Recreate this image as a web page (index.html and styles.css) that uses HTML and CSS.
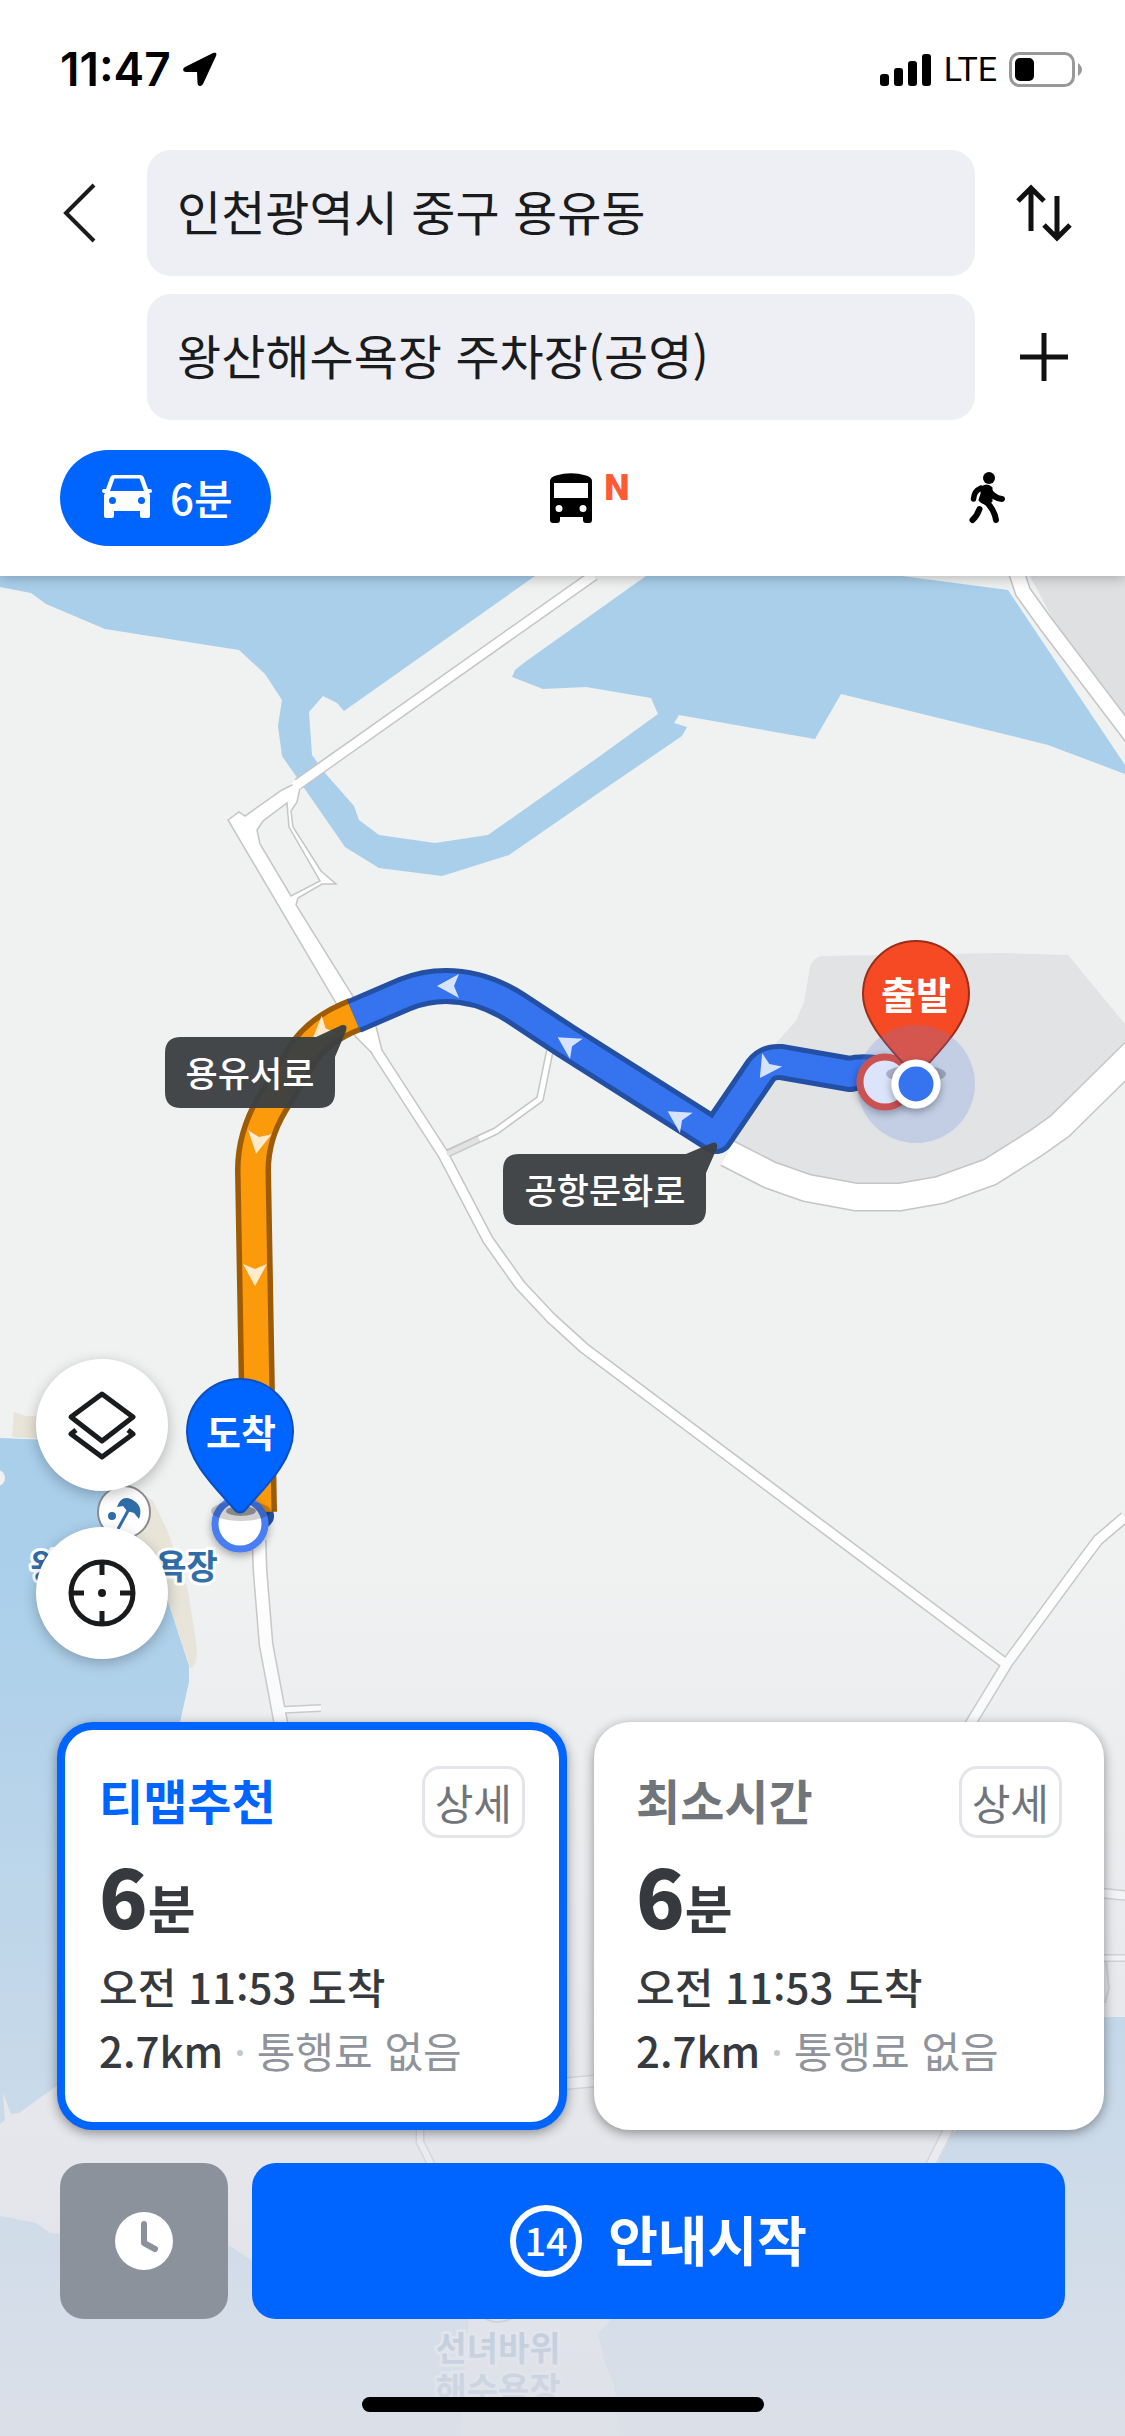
FILE: index.html
```html
<!DOCTYPE html>
<html lang="ko">
<head>
    <meta charset="UTF-8">
    <meta name="viewport" content="width=device-width, initial-scale=1.0">
    <title>길찾기</title>
    <link rel="stylesheet" href="styles.css">
</head>
<body>
    <header class="top">
        <div class="status-bar">
            <div class="status-left">
                <span class="clock">11:47</span>
                <svg width="34" height="34" viewBox="0 0 34 34"><path d="M30 1 L2 15 C-1 17 0 20 3 20 L14 20 L14.500 31 C15 35 18 35 20 32 L33 4 C34 1 33 0 30 1Z"/></svg>
            </div>
            <div class="status-right">
                <svg width="52" height="33" viewBox="0 0 52 33">
                    <rect x="0" y="21" width="9" height="12" rx="3"/>
                    <rect x="14" y="15" width="9" height="18" rx="3"/>
                    <rect x="28" y="8" width="9" height="25" rx="3"/>
                    <rect x="42" y="1" width="9" height="32" rx="3"/>
                </svg>
                <span class="network">LTE</span>
                <svg width="74" height="35" viewBox="0 0 74 35">
                    <rect x="1.500" y="1.500" width="63" height="32" rx="9" fill="none" stroke="#999" stroke-width="3"/>
                    <rect x="6" y="6" width="19" height="23" rx="5"/>
                    <path d="M69 11 Q73 14 73 17.500 Q73 21 69 24Z" fill="#999"/>
                </svg>
            </div>
        </div>

        <form class="route-form">
            <button type="button" class="icon-button back" aria-label="뒤로">
                <svg width="40" height="60" viewBox="0 0 40 60"><path d="M34 2 L6 30 L34 58" fill="none" stroke="#1a1b1d" stroke-width="4"/></svg>
            </button>
            <input type="text" class="place" aria-label="출발지" value="인천광역시 중구 용유동">
            <button type="button" class="icon-button" aria-label="출발지 도착지 바꾸기">
                <svg width="60" height="60" viewBox="0 0 60 60" fill="none" stroke="#111" stroke-width="5">
                    <path d="M17 48 V5 M4 18 L17 5 L30 18"/>
                    <path d="M43 13 V55 M30 42 L43 55 L56 42"/>
                </svg>
            </button>
            <input type="text" class="place place-end" aria-label="도착지" value="왕산해수욕장 주차장(공영)">
            <button type="button" class="icon-button" aria-label="경유지 추가">
                <svg width="60" height="60" viewBox="0 0 60 60"><path d="M30 6 V54 M6 30 H54" stroke="#111" stroke-width="5"/></svg>
            </button>
        </form>

        <nav class="modes">
            <button type="button" class="mode mode-active" aria-label="자동차 6분">
                <svg width="50" height="43" viewBox="0 0 50 43" fill="#fff">
                    <path fill-rule="evenodd" d="M12 0 H38 Q41 0 42 3 L46 14 H48 Q50 14 50 16 Q50 18 48 18 H47 Q48 19 48 21 V41 Q48 43 46 43 H40 Q38 43 38 41 V36 H12 V41 Q12 43 10 43 H4 Q2 43 2 41 V21 Q2 19 3 18 H2 Q0 18 0 16 Q0 14 2 14 H4 L8 3 Q9 0 12 0Z M12.500 3.500 L8 16 H42 L37.500 3.500Z M10.500 22 A3.500 3.500 0 1 0 10.500 29 A3.500 3.500 0 1 0 10.500 22Z M39.500 22 A3.500 3.500 0 1 0 39.500 29 A3.500 3.500 0 1 0 39.500 22Z"/>
                </svg>
                <span>6분</span>
            </button>
            <button type="button" class="mode" aria-label="대중교통">
                <svg width="42" height="50" viewBox="0 0 42 50">
                    <path fill-rule="evenodd" d="M0 8 Q0 4 6 2.500 Q21 -2 36 2.500 Q42 4 42 8 V47 Q42 50 39 50 H36 Q33 50 33 47 V44 H10 V47 Q10 50 7 50 H3 Q0 50 0 47Z M4 10 V25 H38 V10Z M9 32 A3.500 3.500 0 1 0 9 39 A3.500 3.500 0 1 0 9 32Z M33 32 A3.500 3.500 0 1 0 33 39 A3.500 3.500 0 1 0 33 32Z"/>
                </svg>
                <span class="new-mark">N</span>
            </button>
            <button type="button" class="mode mode-walk" aria-label="도보">
                <svg width="36" height="52" viewBox="0 0 36 52" fill="none" stroke="#000" stroke-linecap="round" stroke-linejoin="round">
                    <circle cx="20" cy="6" r="6" fill="#000" stroke="none"/>
                    <path d="M12 16 Q5 19 4.500 27" stroke-width="5.500"/>
                    <path d="M19 17 Q24 26 33 27" stroke-width="6"/>
                    <path d="M13 16 Q18 12 22 16 L22 29 Q17 34 11 28 L13 22Z" fill="#000" stroke-width="3"/>
                    <path d="M15 28 Q25 36 27 48" stroke-width="6"/>
                    <path d="M10.500 37 Q8 44 3.500 48" stroke-width="6"/>
                </svg>
            </button>
        </nav>
    </header>

    <main class="map-area">
        <svg class="map" viewBox="0 576 1125 1860" preserveAspectRatio="xMidYMin slice">
            <defs>
                <path id="arrow" d="M-11 0 L11 -12 L6 0 L11 12Z" fill="#fff" fill-opacity=".8"/>
                <filter id="soft" x="-50%" y="-50%" width="200%" height="200%">
                    <feDropShadow dx="0" dy="3" stdDeviation="4" flood-opacity=".35"/>
                </filter>
            </defs>

            <!-- land -->
            <rect y="576" width="1125" height="1860" fill="#f0f1f1"/>
            <path d="M1030 576 L1058 629 L1125 715 V576Z" fill="#dfe0e1"/>
            <path d="M822 956 L1003 953 L1068 955 L1125 1024 V1060 L1040 1135 L960 1180 L856 1190 L770 1166 L725 1142 L776 1043 L796 1021 L804 1002 L810 967 Q813 957 822 956Z" fill="#e1e3e4"/>

            <!-- water -->
            <g fill="#a9cfeb">
                <path d="M0 576 H535 L344 711 L337 703 L323 696 L309 712 L312 755 L325 773 L354 806 L359 820 L379 835 L435 843 L488 835 L600 756 L658 714 L651 698 L586 687 L543 689 L512 677 L515 670 L525 662 L646 576 H902 L1008 590 L1125 765 V774 L1048 745 L841 694 L815 739 L679 715 L674 723 L687 727 L682 736 L600 792 L509 855 L442 876 L379 868 L345 847 L282 756 L278 726 L282 700 L265 674 L239 650 L105 629 L46 604 L31 593 L0 587Z"/>
                <path d="M0 1438 L100 1442 L140 1500 L168 1601 L189 1666 L189 1682 L176 1740 L120 2040 L19 2113 L11 2114 L3 2093 L5 2120 L0 2124Z"/>
                <path d="M0 2216 L36 2223 L50 2233 L230 2246 L251 2260 L330 2290 L469 2319 L460 2436 H0Z"/>
                <path d="M1125 2017 H1060 L985 2100 L951 2136 L930 2180 L830 2290 L620 2310 L598 2334 L604 2360 L614 2385 L620 2436 H1125Z"/>
            </g>
            <circle cx="-3" cy="1478" r="8" fill="#f0f1f1"/>
            <path d="M14 1412 L25 1416 L110 1418 L110 1443 L12 1437Z" fill="#e8e4d8"/>
            <path d="M125 1480 L153 1501 L168 1532 L188 1591 L197 1648 Q197 1668 190 1668 L168 1601 L120 1500Z" fill="#e8e4d8"/>

            <!-- roads -->
            <g fill="none" stroke="#c5c5c5" stroke-width="12" stroke-linejoin="round">
                <path d="M594 575 L298 784"/>
                <path d="M369 1020 L377 1052 L443 1154 L488 1240 L520 1285 L551 1318 L584 1348 L819 1524 L1006 1664"/>
                <path d="M1125 1517 L1098 1540 L1080 1564 L1008 1662 L930 1790"/>
                <path d="M550 1050 L540 1099 L496 1131 L444 1155" stroke-width="8"/>
                <path d="M259 1540 L260 1570 L266 1644 L284 1740" stroke-width="15"/>
                <path d="M280 1710 L321 1708" stroke-width="8"/>
                <path d="M1014 565 L1023 592 L1046 624 L1140 748" stroke-width="17"/>
                <path d="M727 1153 L770 1175 L807 1188 L856 1197 L900 1197 L940 1190 L990 1172 L1036 1143 L1060 1126 L1135 1052" stroke-width="29"/>
                <path d="M480 2092 L594 2081" stroke-width="13"/>
                <path d="M420 2120 L420 2142 L432 2166" stroke-width="9"/>
                <path d="M950 2126 L930 2166" stroke-width="11"/>
                <path d="M1090 1892 L1130 1896" stroke-width="11"/>
                <path d="M1090 1958 H1130" stroke-width="8"/>
                <path d="M1106 1960 L1109 1988 L1105 2003" stroke-width="2"/>
            </g>
            <path fill="#fff" fill-rule="evenodd" stroke="#c5c5c5" stroke-width="1.500" d="M228 820 L239 812 L245 816 L282 790 L298 782 L300 788 L297 802 L291 811 L293 827 L321 871 L336 884 L322 884 L298 898 L296 905 L374 1030 L374 1040 L384 1054 L378 1059 L356 1037Z M287 803 L289 827 L320 881 L291 896 L260 844 L257 830 L263 821Z"/>
            <g fill="none" stroke="#fff" stroke-width="9" stroke-linejoin="round">
                <path d="M594 575 L294 787"/>
                <path d="M1125 1517 L1098 1540 L1080 1564 L1008 1662 L930 1790"/>
                <path d="M369 1020 L377 1052 L443 1154 L488 1240 L520 1285 L551 1318 L584 1348 L819 1524 L1006 1664"/>
                <path d="M550 1050 L540 1099 L496 1131 L479 1139" stroke-width="5"/>
                <path d="M479 1139 L447 1154" stroke="#e2e2e2" stroke-width="5"/>
                <path d="M259 1540 L260 1570 L266 1644 L284 1740" stroke-width="12"/>
                <path d="M280 1710 L321 1708" stroke-width="5"/>
                <path d="M1014 565 L1023 592 L1046 624 L1140 748" stroke-width="14"/>
                <path d="M727 1153 L770 1175 L807 1188 L856 1197 L900 1197 L940 1190 L990 1172 L1036 1143 L1060 1126 L1135 1052" stroke-width="26"/>
                <path d="M480 2092 L594 2081" stroke-width="10"/>
                <path d="M420 2120 L420 2142 L432 2166" stroke-width="6"/>
                <path d="M950 2126 L930 2166" stroke-width="8"/>
                <path d="M1090 1892 L1130 1896" stroke-width="8"/>
                <path d="M1090 1958 H1130" stroke-width="5"/>
            </g>

            <!-- route -->
            <g fill="none" stroke-linejoin="round">
                <path d="M258 1500 L262 1516 L250 1528" stroke="#2450a4" stroke-width="24"/>
                <path d="M355 1015 Q318 1029 300 1058 L272 1104 Q253 1136 253 1170 L259 1512" stroke="#9c5b04" stroke-width="36"/>
                <path d="M355 1015 Q318 1029 300 1058 L272 1104 Q253 1136 253 1170 L259 1512" stroke="#fb9a0b" stroke-width="25"/>
                <path d="M885 1075 Q865 1070 850 1074 L781 1062 Q768 1061 761 1070 L716 1136 L566 1041 L516 1008 Q482 986 446 986 Q425 986 405 994 L354 1016" stroke="#2450a4" stroke-width="36"/>
                <path d="M885 1075 Q865 1070 850 1074 L781 1062 Q768 1061 761 1070 L716 1136 L566 1041 L516 1008 Q482 986 446 986 Q425 986 405 994 L354 1016" stroke="#3573ef" stroke-width="26"/>
            </g>
            <use href="#arrow" transform="translate(448 986)"/>
            <use href="#arrow" transform="translate(567 1043) rotate(32)"/>
            <use href="#arrow" transform="translate(677 1117) rotate(32)"/>
            <use href="#arrow" transform="translate(766 1069) rotate(-56)"/>
            <use href="#arrow" transform="translate(321 1032) rotate(-40)"/>
            <use href="#arrow" transform="translate(258 1143) rotate(-80)"/>
            <use href="#arrow" transform="translate(255 1275) rotate(-90)"/>

            <!-- road name labels -->
            <g class="road-label">
                <path d="M181 1037 H316 L342 1025 Q348 1024 346 1031 L335 1057 V1092 Q335 1108 319 1108 H181 Q165 1108 165 1092 V1053 Q165 1037 181 1037Z"/>
                <text x="250" y="1087">용유서로</text>
                <path d="M519 1154 H686 L712 1143 Q718 1141 717 1148 L706 1173 V1209 Q706 1225 690 1225 H519 Q503 1225 503 1209 V1170 Q503 1154 519 1154Z"/>
                <text x="605" y="1204">공항문화로</text>
            </g>

            <!-- beaches -->
            <g class="poi">
                <circle cx="124" cy="1512" r="26" fill="#fff" stroke="#8a8c90" stroke-width="2"/>
                <path d="M117 1507 Q121 1495 131 1499 Q144 1505 139 1519 L134 1513 L127 1511 L123 1506Z M108 1516 A4 4 0 1 1 116 1516 A4 4 0 1 1 108 1516Z"/>
                <path d="M129 1509 L118 1529" stroke="#2f6da8" stroke-width="3"/>
                <text x="124" y="1579">왕산해수욕장</text>
                <circle cx="498" cy="2296" r="26" fill="#fff" stroke="#8a8c90" stroke-width="2"/>
                <text x="498" y="2361">선녀바위</text>
                <text x="498" y="2402">해수욕장</text>
            </g>

            <!-- arrival pin -->
            <circle cx="240" cy="1524" r="25" fill="#fff" stroke="#4a7df2" stroke-width="7" filter="url(#soft)"/>
            <ellipse cx="241" cy="1511" rx="30" ry="10" fill="#000" fill-opacity=".18"/>
            <ellipse cx="241" cy="1511" rx="15" ry="5" fill="#000" fill-opacity=".35"/>
            <path d="M240 1379 A53 53 0 0 1 293 1432 C293 1462 262 1490 246 1509 Q240 1516 234 1509 C218 1490 187 1462 187 1432 A53 53 0 0 1 240 1379Z" fill="#0064ff" stroke="#0a4fbd" stroke-width="2"/>
            <text class="pin-text" x="241" y="1447">도착</text>

            <!-- departure pin and current location -->
            <circle cx="885" cy="1082" r="25" fill="#fff" stroke="#e8452c" stroke-width="7" filter="url(#soft)"/>
            <ellipse cx="916" cy="1074" rx="30" ry="9" fill="#000" fill-opacity=".25"/>
            <path d="M916 941 A53 53 0 0 1 969 994 C969 1024 938 1052 922 1071 Q916 1078 910 1071 C894 1052 863 1024 863 994 A53 53 0 0 1 916 941Z" fill="#f64a25" stroke="#9c2d18" stroke-width="2"/>
            <text class="pin-text" x="916" y="1009">출발</text>
            <circle cx="916" cy="1084" r="59" fill="#5a85ea" fill-opacity=".22"/>
            <circle cx="916" cy="1084" r="21" fill="#3573ef" stroke="#fff" stroke-width="7" filter="url(#soft)"/>
        </svg>

        <div class="map-tools">
            <button type="button" class="round-button" aria-label="지도 종류">
                <svg width="70" height="70" viewBox="0 0 70 70" fill="none" stroke="#1a1b1d" stroke-width="5" stroke-linejoin="round">
                    <path d="M35 4 L66 27 L35 51 L4 27Z"/>
                    <path d="M9 40 L4 44 L35 67 L66 44 L61 40"/>
                </svg>
            </button>
            <button type="button" class="round-button" aria-label="현재 위치">
                <svg width="70" height="70" viewBox="0 0 70 70" fill="none" stroke="#1a1b1d" stroke-width="5">
                    <circle cx="35" cy="35" r="31"/>
                    <path d="M35 4 V17 M35 53 V66 M4 35 H17 M53 35 H66"/>
                    <circle cx="35" cy="35" r="4" fill="#1a1b1d" stroke="none"/>
                </svg>
            </button>
        </div>

        <div class="routes">
            <article class="route route-selected">
                <div class="route-head">
                    <h2>티맵추천</h2>
                    <button type="button" class="detail">상세</button>
                </div>
                <p class="duration"><strong>6</strong>분</p>
                <p class="arrival">오전 11:53 도착</p>
                <p class="arrival">2.7km <i class="dot"></i> <span class="toll">통행료 없음</span></p>
            </article>
            <article class="route">
                <div class="route-head">
                    <h2>최소시간</h2>
                    <button type="button" class="detail">상세</button>
                </div>
                <p class="duration"><strong>6</strong>분</p>
                <p class="arrival">오전 11:53 도착</p>
                <p class="arrival">2.7km <i class="dot"></i> <span class="toll">통행료 없음</span></p>
            </article>
        </div>

        <div class="actions">
            <button type="button" class="later" aria-label="출발 시간 설정">
                <svg width="58" height="58" viewBox="0 0 58 58">
                    <circle cx="29" cy="29" r="29" fill="#fff"/>
                    <path d="M29 12 V31 L40 37" fill="none" stroke="#8c929b" stroke-width="6" stroke-linecap="round" stroke-linejoin="round"/>
                </svg>
            </button>
            <button type="button" class="start">
                <span class="countdown">14</span>
                <span class="start-label">안내시작</span>
            </button>
        </div>

        <div class="home-indicator"></div>
    </main>
</body>
</html>
```
FILE: styles.css
```css
* {
    box-sizing: border-box;
}
body {
    margin: 0;
    min-height: 100vh;
    display: flex;
    flex-direction: column;
    font-family: "Noto Sans CJK KR", sans-serif;
    color: #36393d;
    background: #fff;
}
button, input {
    font-family: inherit;
    border: none;
    padding: 0;
    margin: 0;
    background: none;
}
button {
    cursor: pointer;
}
svg {
    display: block;
}
h2, p {
    margin: 0;
}

/* header */
.top {
    position: relative;
    z-index: 1;
    background: #fff;
    box-shadow: 0 2px 12px rgba(0, 0, 0, 0.25);
    padding-bottom: 30px;
}
.status-bar {
    display: flex;
    justify-content: space-between;
    align-items: center;
    height: 138px;
    padding: 0 42px 0 60px;
    color: #000;
}
.status-left, .status-right {
    display: flex;
    align-items: center;
    gap: 12px;
}
.clock {
    font-family: Inter, sans-serif;
    font-size: 46px;
    font-weight: 600;
}
.network {
    font-family: Roboto, sans-serif;
    font-size: 34px;
}
.route-form {
    display: grid;
    grid-template-columns: 87px 1fr 99px;
    row-gap: 18px;
    align-items: center;
    padding: 12px 51px 30px 60px;
}
.icon-button {
    display: flex;
    justify-content: flex-end;
}
.back {
    justify-content: flex-start;
}
.place {
    width: 100%;
    height: 126px;
    padding: 0 30px 6px;
    border-radius: 24px;
    background: #eeeff4;
    font-size: 48px;
    color: #1a1b1d;
}
.place-end {
    grid-column: 2;
}
.modes {
    display: flex;
    justify-content: space-between;
    align-items: center;
    padding: 0 60px;
}
.mode {
    display: flex;
    align-items: center;
    gap: 12px;
    height: 96px;
    font-size: 42px;
    font-weight: 500;
}
.mode-active {
    gap: 18px;
    padding: 0 38px 4px 42px;
    border-radius: 48px;
    background: #0064ff;
    color: #fff;
}
.mode-walk {
    padding: 0 60px;
}
.new-mark {
    align-self: flex-start;
    padding-top: 18px;
    font-family: Roboto, sans-serif;
    font-size: 36px;
    font-weight: 900;
    line-height: 40px;
    color: #ff5a36;
}

/* map */
.map-area {
    position: relative;
    flex: 1;
    display: flex;
    flex-direction: column;
    justify-content: flex-end;
    overflow: hidden;
    background: #f0f1f1;
}
.map {
    position: absolute;
    inset: 0;
    width: 100%;
    height: 100%;
}
.map-area::before {
    content: "";
    position: absolute;
    inset: auto 0 0;
    height: 880px;
    z-index: 1;
    background: linear-gradient(rgba(223, 225, 232, 0), rgba(223, 225, 232, 0.64) 66%, rgba(221, 224, 232, 0.96));
}
.map-tools, .routes, .actions, .home-indicator {
    position: relative;
    z-index: 2;
}
.road-label path {
    fill: #3b3f43;
    fill-opacity: 0.96;
}
.road-label text {
    fill: #fff;
    font-size: 35px;
    font-weight: 500;
    text-anchor: middle;
}
.poi {
    fill: #2f6da8;
}
.poi text {
    font-size: 34px;
    font-weight: 700;
    text-anchor: middle;
    stroke: #fff;
    stroke-width: 6px;
    stroke-linejoin: round;
    paint-order: stroke;
}
.pin-text {
    fill: #fff;
    font-size: 38px;
    font-weight: 700;
    text-anchor: middle;
}
.map-tools {
    display: flex;
    flex-direction: column;
    align-items: flex-start;
    gap: 36px;
    padding: 0 36px 63px;
}
.round-button {
    display: flex;
    justify-content: center;
    align-items: center;
    width: 132px;
    height: 132px;
    border-radius: 50%;
    background: #fff;
    box-shadow: 0 4px 14px rgba(0, 0, 0, 0.25);
}

/* route cards */
.routes {
    display: flex;
    gap: 27px;
    padding: 0 57px;
}
.route {
    flex: none;
    width: 510px;
    padding: 36px 34px 40px;
    border: 8px solid #fff;
    border-radius: 36px;
    background: #fff;
    box-shadow: 0 3px 12px rgba(0, 0, 0, 0.4);
}
.route-selected {
    border-color: #0064ff;
}
.route-head {
    display: flex;
    justify-content: space-between;
    align-items: center;
}
.route-head h2 {
    padding-bottom: 6px;
    font-size: 48px;
    font-weight: 700;
    line-height: 66px;
    color: #6f757b;
}
.route-selected h2 {
    color: #0064ff;
}
.detail {
    height: 72px;
    padding: 0 10px;
    border: 3px solid #e3e5ea;
    border-radius: 18px;
    font-size: 42px;
    line-height: 60px;
    color: #6f757b;
}
.duration {
    display: flex;
    align-items: baseline;
    height: 116px;
    padding-top: 16px;
    font-size: 52px;
    font-weight: 700;
    line-height: 56px;
}
.duration strong {
    font-size: 80px;
    line-height: 80px;
}
.arrival {
    font-size: 42px;
    font-weight: 500;
    line-height: 64px;
}
.toll {
    font-weight: 400;
    color: #8f949c;
}
.dot {
    display: inline-block;
    width: 6px;
    height: 6px;
    margin: 0 2px 12px;
    border-radius: 50%;
    background: #c3c7d0;
}

/* bottom buttons */
.actions {
    display: flex;
    gap: 24px;
    padding: 33px 60px 78px;
}
.later, .start {
    display: flex;
    justify-content: center;
    align-items: center;
    height: 156px;
    border-radius: 24px;
}
.later {
    width: 168px;
    background: #8c929b;
}
.start {
    flex: 1;
    gap: 26px;
    background: #0064ff;
    font-size: 54px;
    font-weight: 700;
    color: #fff;
}
.start-label {
    padding-bottom: 6px;
}
.countdown {
    width: 72px;
    height: 72px;
    border: 6px solid #fff;
    border-radius: 50%;
    font-size: 38px;
    font-weight: 500;
    line-height: 58px;
    text-align: center;
}
.home-indicator {
    align-self: center;
    width: 402px;
    height: 15px;
    margin-bottom: 24px;
    border-radius: 8px;
    background: #000;
}
```
